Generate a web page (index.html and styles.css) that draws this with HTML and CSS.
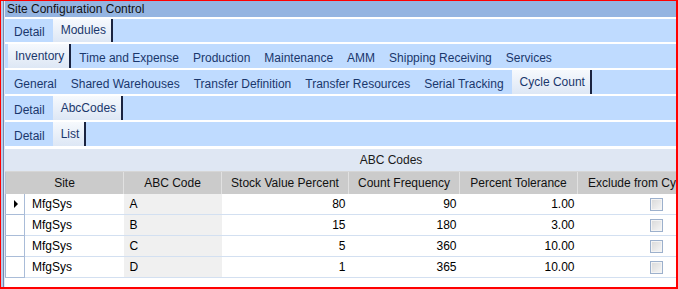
FILE: index.html
```html
<!DOCTYPE html>
<html lang="en">
<head>
    <meta charset="UTF-8">
    <title>Site Configuration Control</title>
    <link rel="stylesheet" href="styles.css">
</head>
<body>
<div class="window">
    <div class="side"></div>
    <div class="main">
        <div class="title">Site Configuration Control</div>

        <!-- tab strips -->
        <div class="tabrow first">
            <div class="tab">Detail</div>
            <div class="tab selected">Modules</div>
        </div>
        <div class="tabrow">
            <div class="tab selected">Inventory</div>
            <div class="tab">Time and Expense</div>
            <div class="tab">Production</div>
            <div class="tab">Maintenance</div>
            <div class="tab">AMM</div>
            <div class="tab">Shipping Receiving</div>
            <div class="tab">Services</div>
        </div>
        <div class="tabrow">
            <div class="tab">General</div>
            <div class="tab">Shared Warehouses</div>
            <div class="tab">Transfer Definition</div>
            <div class="tab">Transfer Resources</div>
            <div class="tab">Serial Tracking</div>
            <div class="tab selected">Cycle Count</div>
        </div>
        <div class="tabrow">
            <div class="tab">Detail</div>
            <div class="tab selected">AbcCodes</div>
        </div>
        <div class="tabrow">
            <div class="tab">Detail</div>
            <div class="tab selected">List</div>
        </div>

        <!-- grid -->
        <div class="grid">
            <div class="caption">ABC Codes</div>
            <table>
                <colgroup>
                    <col class="c-sel">
                    <col class="c-site">
                    <col class="c-code">
                    <col class="c-stock">
                    <col class="c-freq">
                    <col class="c-tol">
                    <col class="c-excl">
                    <col>
                </colgroup>
                <thead>
                    <tr>
                        <th colspan="2">Site</th>
                        <th>ABC Code</th>
                        <th>Stock Value Percent</th>
                        <th>Count Frequency</th>
                        <th>Percent Tolerance</th>
                        <th class="left">Exclude from Cycle Count</th>
                        <th></th>
                    </tr>
                </thead>
                <tbody>
                    <tr>
                        <td class="sel"><span class="arrow"></span></td>
                        <td class="site">MfgSys</td>
                        <td class="code">A</td>
                        <td class="num">80</td>
                        <td class="num">90</td>
                        <td class="num">1.00</td>
                        <td class="chk"><span class="box"></span></td>
                        <td></td>
                    </tr>
                    <tr>
                        <td class="sel"></td>
                        <td class="site">MfgSys</td>
                        <td class="code">B</td>
                        <td class="num">15</td>
                        <td class="num">180</td>
                        <td class="num">3.00</td>
                        <td class="chk"><span class="box"></span></td>
                        <td></td>
                    </tr>
                    <tr>
                        <td class="sel"></td>
                        <td class="site">MfgSys</td>
                        <td class="code">C</td>
                        <td class="num">5</td>
                        <td class="num">360</td>
                        <td class="num">10.00</td>
                        <td class="chk"><span class="box"></span></td>
                        <td></td>
                    </tr>
                    <tr>
                        <td class="sel"></td>
                        <td class="site">MfgSys</td>
                        <td class="code">D</td>
                        <td class="num">1</td>
                        <td class="num">365</td>
                        <td class="num">10.00</td>
                        <td class="chk"><span class="box"></span></td>
                        <td></td>
                    </tr>
                </tbody>
            </table>
        </div>
    </div>
</div>
</body>
</html>
```

FILE: styles.css
```css
/* --------------------
 Site configuration window
 -------------------- */

* {
    box-sizing: border-box;
    font-family: "Liberation Sans", Arial, sans-serif;
}

body {
    margin: 0;
    background: #fff;
}

.window {
    width: 678px;
    height: 289px;
    display: flex;
    overflow: hidden;
    border-top: 1px solid #f00;
    border-left: 1px solid #f00;
    border-right: 2px solid #f00;
    border-bottom: 2px solid #f00;
    background: #fff;
}

.side {
    width: 3px;
    flex: none;
    background: #b6cbea;
    border-right: 1px solid #7489ad;
}

.main {
    flex: 1;
    min-width: 0;
    overflow: hidden;
    border-left: 1px solid #dfe8f5;
}

.title {
    height: 16px;
    line-height: 16px;
    padding-left: 2px;
    font-size: 12px;
    color: #111;
    background: #94b4e1;
}

/* tab strips */
.tabrow {
    display: flex;
    gap: 2px;
    height: 24px;
    margin-top: 2px;
    padding-left: 3px;
    background: #bfdbff;
}

.tabrow.first {
    height: 23px;
}

.tab {
    display: flex;
    align-items: center;
    padding: 3px 6px 0;
    font-size: 12px;
    color: #1a376c;
    white-space: nowrap;
}

.tab.selected {
    padding: 0 5px 1px 8px;
    background: linear-gradient(#f6f9fd, #dde7f5);
    border-right: 2px solid #1a2340;
}

.tab.selected:first-child {
    padding-left: 7px;
}

/* grid */
.grid {
    margin-top: 3px;
    width: 772px;
}

.caption {
    height: 22px;
    line-height: 22px;
    text-align: center;
    font-size: 12px;
    color: #1a1a1a;
    background: #dfe7f3;
}

table {
    border-collapse: collapse;
    table-layout: fixed;
    width: 772px;
}

.c-sel { width: 19px; }
.c-site { width: 99px; }
.c-code { width: 98px; }
.c-stock { width: 127px; }
.c-freq { width: 111px; }
.c-tol { width: 118px; }
.c-excl { width: 158px; }

th {
    height: 22px;
    padding: 0;
    font-size: 12px;
    font-weight: normal;
    color: #111;
    background: #cbcbcb;
    border-left: 1px solid #e1e1e1;
    border-top: 1px solid #d6d6d6;
    white-space: nowrap;
    overflow: hidden;
}

th:first-child {
    border-left: 1px solid #b7c3d3;
}

th.left {
    text-align: left;
    padding-left: 10px;
}

td {
    height: 21px;
    padding: 0;
    font-size: 12px;
    color: #000;
    border-bottom: 1px solid #d3e0f1;
    white-space: nowrap;
}

td.sel {
    position: relative;
    border-left: 1px solid #9fb2cf;
    border-right: 1px solid #a9bcd8;
    border-bottom: 1px solid #a9bcd8;
}

.arrow {
    position: absolute;
    left: 8px;
    top: 6px;
    border-top: 4px solid transparent;
    border-bottom: 4px solid transparent;
    border-left: 4px solid #000;
}

td.site {
    padding-left: 7px;
}

td.code {
    padding-left: 6px;
    background: #f0f0f0;
}

td.num {
    text-align: right;
    padding-right: 3px;
}

td.chk {
    text-align: center;
}

.box {
    display: inline-block;
    width: 13px;
    height: 13px;
    vertical-align: middle;
    border: 1px solid #9cb0cc;
    box-shadow: inset 0 0 0 1px #f4f4f4;
    background: linear-gradient(135deg, #d8d8d8, #f7f7f7);
}
```
